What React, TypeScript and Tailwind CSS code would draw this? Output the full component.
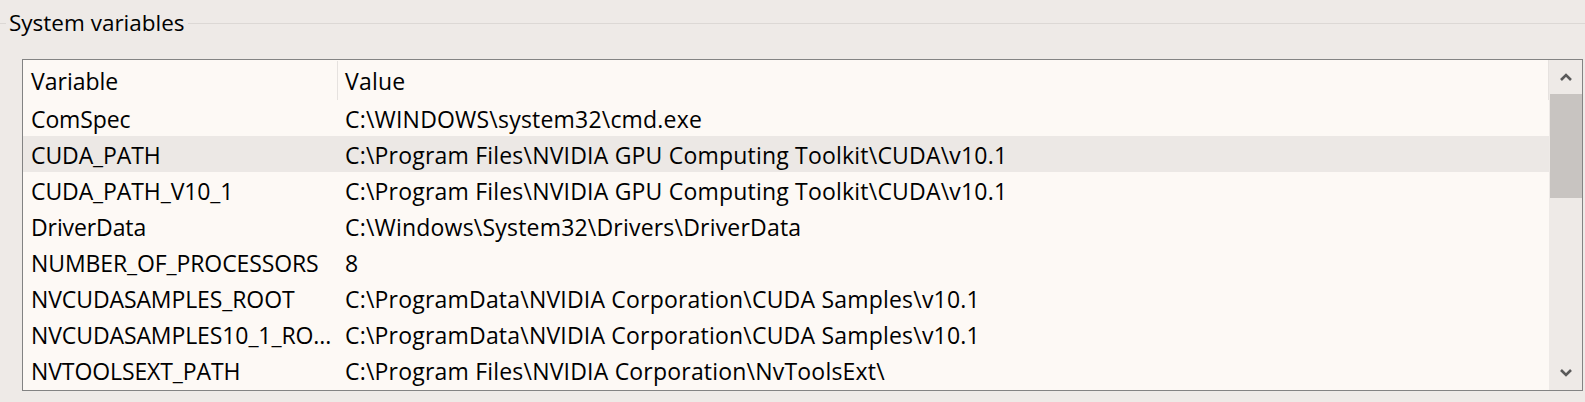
import React from "react";

const rows: [string, string][] = [
  ["ComSpec", "C:\\WINDOWS\\system32\\cmd.exe"],
  ["CUDA_PATH", "C:\\Program Files\\NVIDIA GPU Computing Toolkit\\CUDA\\v10.1"],
  ["CUDA_PATH_V10_1", "C:\\Program Files\\NVIDIA GPU Computing Toolkit\\CUDA\\v10.1"],
  ["DriverData", "C:\\Windows\\System32\\Drivers\\DriverData"],
  ["NUMBER_OF_PROCESSORS", "8"],
  ["NVCUDASAMPLES_ROOT", "C:\\ProgramData\\NVIDIA Corporation\\CUDA Samples\\v10.1"],
  ["NVCUDASAMPLES10_1_RO...", "C:\\ProgramData\\NVIDIA Corporation\\CUDA Samples\\v10.1"],
  ["NVTOOLSEXT_PATH", "C:\\Program Files\\NVIDIA Corporation\\NvToolsExt\\"],
];

export default function App() {
  return (
    <div
      className="w-[1585px] h-[402px] bg-[#eeeae7] text-[#000] overflow-hidden"
      style={{ fontFamily: '"Open Sans", "Noto Sans", sans-serif' }}
    >
      <div className="flex items-center h-[46px]">
        <div className="w-[6px] h-px bg-[#dcd8d5]" />
        <div className="px-[3px] text-[22.5px] leading-[46px]">System variables</div>
        <div className="flex-1 h-px bg-[#dcd8d5]" />
      </div>
      <div className="ml-[22px] mt-[13px] w-[1561px] h-[332px] border border-[#838383] bg-[#fdf9f5] flex">
        <div className="flex-1 flex flex-col">
          <div className="h-[40px] flex items-stretch shrink-0 text-[23px]">
            <div className="w-[314px] flex items-center pl-[8px] pt-[3px]">Variable</div>
            <div className="w-px bg-[#e6e2df] mt-[1px]" />
            <div className="flex-1 flex items-center pl-[7px] pt-[3px] tracking-[0.2px]">Value</div>
            <div className="w-px bg-[#e6e2df]" />
          </div>
          {rows.map(([k, v], i) => (
            <div
              key={k}
              className={`h-[36px] flex items-center shrink-0 text-[23px] pt-[2px] ${
                i === 1 ? "bg-[#ece8e5]" : ""
              }`}
            >
              <div className="w-[315px] pl-[8px] whitespace-nowrap overflow-hidden tracking-[-0.1px]">{k}</div>
              <div className="flex-1 pl-[7px] whitespace-nowrap tracking-[0.2px]">{v}</div>
            </div>
          ))}
        </div>
        <div className="w-[33px] bg-[#eeeae7] flex flex-col items-center shrink-0">
          <div className="h-[34px] w-full flex items-center justify-center">
            <svg width="12" height="8" viewBox="0 0 12 8">
              <path d="M1 7 L6 2 L11 7" fill="none" stroke="#5a5a5a" strokeWidth="2.6" />
            </svg>
          </div>
          <div className="w-[32px] h-[104px] bg-[#c8c4c1]" />
          <div className="flex-1" />
          <div className="h-[34px] w-full flex items-center justify-center">
            <svg width="12" height="8" viewBox="0 0 12 8">
              <path d="M1 1 L6 6 L11 1" fill="none" stroke="#5a5a5a" strokeWidth="2.6" />
            </svg>
          </div>
        </div>
      </div>
    </div>
  );
}
